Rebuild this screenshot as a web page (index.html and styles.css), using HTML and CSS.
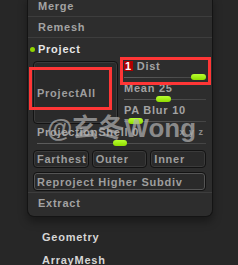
FILE: index.html
```html
<!DOCTYPE html>
<html>
<head>
<meta charset="utf-8">
<link rel="stylesheet" href="styles.css">
</head>
<body>
<div class="panel">
  <div class="item">Merge</div>
  <div class="item">Remesh</div>
  <div class="item head"><span class="dot"></span>Project</div>
  <div class="project">
    <div class="top">
      <div class="btn big">ProjectAll<span class="mark mark-a"></span></div>
      <div class="sliders">
        <div class="slider">
          <div class="label"><span class="num">1</span> Dist</div>
          <div class="track"><span class="knob" style="left:67px"></span></div>
        </div>
        <div class="slider">
          <div class="label">Mean 25</div>
          <div class="track"><span class="knob" style="left:32px"></span></div>
        </div>
        <div class="slider">
          <div class="label">PA Blur 10</div>
          <div class="track"><span class="knob" style="left:4px"></span></div>
        </div>
        <span class="mark mark-b"></span>
      </div>
    </div>
    <div class="slider shell">
      <div class="label shell-label"><span>ProjectionShell 0</span><span class="xyz">x y z</span></div>
      <div class="track"><span class="knob" style="left:76px"></span></div>
    </div>
    <div class="row3">
      <div class="btn">Farthest</div>
      <div class="btn">Outer</div>
      <div class="btn">Inner</div>
    </div>
    <div class="btn wide">Reproject Higher Subdiv</div>
    <div class="watermark">@玄冬Wong</div>
  </div>
  <div class="item last">Extract</div>
</div>
<div class="sub">Geometry</div>
<div class="sub">ArrayMesh</div>
</body>
</html>
```
FILE: styles.css
```css
html, body {
  margin: 0;
  padding: 0;
}
body {
  background: #272727;
  font-family: "Liberation Sans", Arial, sans-serif;
  font-weight: bold;
  font-size: 11px;
  letter-spacing: 0.75px;
  color: #a3a3a3;
  width: 238px;
  height: 265px;
  overflow: hidden;
}
.panel {
  margin-top: -4px;
  margin-left: 27px;
  width: 186px;
  box-sizing: border-box;
  background: #2d2d2d;
  border: 1px solid #141414;
  border-top: none;
  border-radius: 0 0 7px 7px;
  box-shadow: 0 5px 8px rgba(0, 0, 0, 0.35);
}
.item {
  height: 20px;
  line-height: 20px;
  padding-left: 10px;
  border-bottom: 1px solid #3d3d3d;
}
.item.head {
  height: 22px;
  line-height: 22px;
  border-bottom: none;
  color: #e6e6e6;
  display: flex;
  align-items: center;
  padding-left: 2px;
}
.dot {
  width: 5px;
  height: 5px;
  border-radius: 50%;
  background: #8fd400;
  margin-right: 3px;
}
.item.last {
  border-bottom: none;
  padding-bottom: 3px;
}
.project {
  position: relative;
  padding: 0 6px 1px 5px;
  border-bottom: 1px solid #3d3d3d;
}
.top {
  display: flex;
  gap: 2px;
}
.btn {
  position: relative;
  box-sizing: border-box;
  background: #2a2a2a;
  border: 1px solid #131313;
  border-radius: 4px;
  box-shadow: inset 0 0 0 1px #3b3b3b;
  color: #9e9e9e;
  padding-left: 3px;
  display: flex;
  align-items: center;
  white-space: nowrap;
}
.btn.big {
  width: 85px;
  height: 63px;
  margin-top: 1px;
}
.sliders {
  position: relative;
  width: 91px;
  margin-right: -6px;
  padding-left: 4px;
  padding-right: 5px;
  box-sizing: border-box;
}
.slider {
  height: 22px;
}
.label {
  height: 13px;
  line-height: 13px;
  color: #a3a3a3;
  white-space: nowrap;
}
.num {
  background: #b00000;
  color: #ffffff;
  padding: 0 1px;
  display: inline-block;
  line-height: 10px;
  height: 10px;
}
.track {
  position: relative;
  height: 1px;
  margin-top: 4px;
  background: linear-gradient(to right, #5c5c5c, #444444);
}
.knob {
  position: absolute;
  top: -3px;
  width: 15px;
  height: 6px;
  border-radius: 3px;
  background: linear-gradient(#b8ff30, #8fdc00);
}
.shell {
  padding-left: 4px;
  padding-right: 0;
}
.shell-label {
  display: flex;
  justify-content: space-between;
  padding-right: 2px;
}
.shell .knob {
  width: 14px;
}
.xyz {
  font-size: 9px;
  color: #8a8a8a;
  letter-spacing: 1px;
}
.row3 {
  display: flex;
  gap: 3px;
  margin-top: 2px;
}
.row3 .btn {
  flex: 1;
  height: 18px;
}
.btn.wide {
  margin-top: 4px;
  height: 19px;
  width: 173px;
  box-shadow: inset 0 0 0 1px #555555;
}
.mark {
  position: absolute;
  border: 3px solid #ff3636;
  box-sizing: border-box;
}
.mark-a {
  left: -5px;
  top: 5px;
  width: 83px;
  height: 43px;
}
.mark-b {
  left: 0;
  top: -3px;
  width: 91px;
  height: 28px;
}
.watermark {
  position: absolute;
  left: 19px;
  top: 53px;
  font-family: "Liberation Sans", "Noto Sans CJK SC", sans-serif;
  font-size: 26px;
  line-height: 30px;
  letter-spacing: 0;
  color: rgba(175, 175, 175, 0.72);
  white-space: nowrap;
  pointer-events: none;
}
.sub {
  height: 23px;
  line-height: 23px;
  padding-left: 42px;
  color: #d6d6d6;
}
.panel + .sub {
  margin-top: 9px;
}
```
